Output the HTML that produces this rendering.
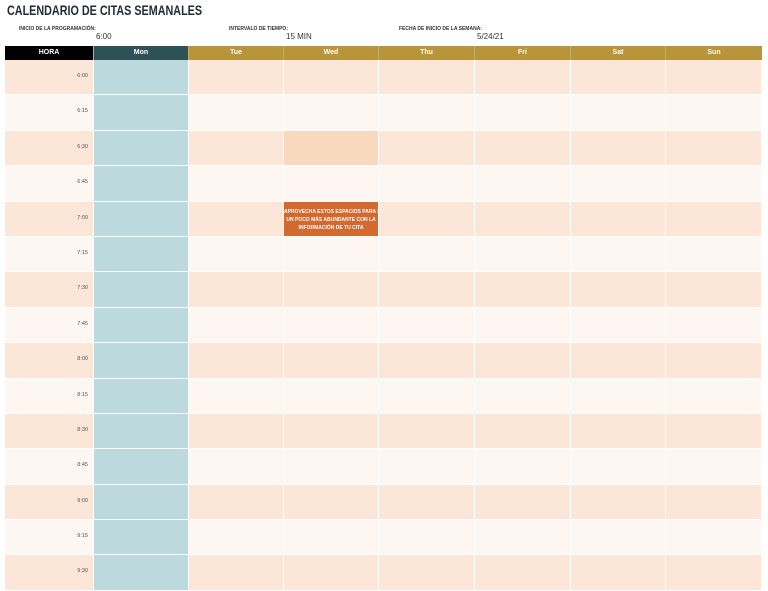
<!DOCTYPE html>
<html><head><meta charset="utf-8"><style>
*{margin:0;padding:0;box-sizing:border-box}
body{width:768px;height:583px;overflow:hidden;background:#fff;font-family:"Liberation Sans",sans-serif;position:relative}
.t{position:absolute;left:7px;top:2px;font-size:14px;font-weight:bold;color:#1f2b33;transform:scaleX(0.77);transform-origin:0 0;white-space:nowrap}
.lb{position:absolute;font-size:5px;font-weight:bold;color:#333;top:26px}
.v{position:absolute;font-size:8px;color:#333;top:32px}
.grid{position:absolute;left:5px;top:46px;width:757px;display:grid;grid-template-columns:89px 95px 95px 95px 96px 96px 95px 96px}
.h{height:13.5px;color:#fff;font-size:7px;font-weight:bold;text-align:center;line-height:13.5px;background:#b8953a;border-right:1px solid #c9ad66}
.rows{position:absolute;left:5px;top:60px;width:757px}
.r{height:35.4px;display:grid;grid-template-columns:89px 95px 95px 95px 96px 96px 95px 96px;border-bottom:1.5px solid #fff}
.r div{border-right:1px solid #fff;position:relative}
.o div{background:#fbe6d8}.e div{background:#fdf6f1}
.r div.m{background:#bcd9de}
.r div.tm{font-size:5.5px;color:#555;text-align:right;padding-right:5px;line-height:33px}
</style></head><body>
<div class="t">CALENDARIO DE CITAS SEMANALES</div>
<div class="lb" style="left:19px">INICIO DE LA PROGRAMACIÓN:</div><div class="v" style="left:96px">6:00</div>
<div class="lb" style="left:229px">INTERVALO DE TIEMPO:</div><div class="v" style="left:286px">15 MIN</div>
<div class="lb" style="left:399px">FECHA DE INICIO DE LA SEMANA:</div><div class="v" style="left:477px">5/24/21</div>
<div class="grid">
<div class="h" style="background:#000">HORA</div><div class="h" style="background:#2e5157">Mon</div><div class="h">Tue</div><div class="h">Wed</div><div class="h">Thu</div><div class="h">Fri</div><div class="h">Sat</div><div class="h" style="border:0">Sun</div>
</div>
<div class="rows">
<div class="r o"><div class="tm">6:00</div><div class="m"></div><div></div><div></div><div></div><div></div><div></div><div></div></div>
<div class="r e"><div class="tm">6:15</div><div class="m"></div><div></div><div></div><div></div><div></div><div></div><div></div></div>
<div class="r o"><div class="tm">6:30</div><div class="m"></div><div></div><div style="background:#f9d9bd"></div><div></div><div></div><div></div><div></div></div>
<div class="r e"><div class="tm">6:45</div><div class="m"></div><div></div><div></div><div></div><div></div><div></div><div></div></div>
<div class="r o"><div class="tm">7:00</div><div class="m"></div><div></div><div style="background:#d2692f;color:#fff;font-size:5px;font-weight:bold;text-align:center;line-height:8px;padding-top:6px;white-space:nowrap;overflow:hidden">APROVECHA ESTOS ESPACIOS PARA SER<br>UN POCO MÁS ABUNDANTE CON LA<br>INFORMACIÓN DE TU CITA</div><div></div><div></div><div></div><div></div></div>
<div class="r e"><div class="tm">7:15</div><div class="m"></div><div></div><div></div><div></div><div></div><div></div><div></div></div>
<div class="r o"><div class="tm">7:30</div><div class="m"></div><div></div><div></div><div></div><div></div><div></div><div></div></div>
<div class="r e"><div class="tm">7:45</div><div class="m"></div><div></div><div></div><div></div><div></div><div></div><div></div></div>
<div class="r o"><div class="tm">8:00</div><div class="m"></div><div></div><div></div><div></div><div></div><div></div><div></div></div>
<div class="r e"><div class="tm">8:15</div><div class="m"></div><div></div><div></div><div></div><div></div><div></div><div></div></div>
<div class="r o"><div class="tm">8:30</div><div class="m"></div><div></div><div></div><div></div><div></div><div></div><div></div></div>
<div class="r e"><div class="tm">8:45</div><div class="m"></div><div></div><div></div><div></div><div></div><div></div><div></div></div>
<div class="r o"><div class="tm">9:00</div><div class="m"></div><div></div><div></div><div></div><div></div><div></div><div></div></div>
<div class="r e"><div class="tm">9:15</div><div class="m"></div><div></div><div></div><div></div><div></div><div></div><div></div></div>
<div class="r o"><div class="tm">9:30</div><div class="m"></div><div></div><div></div><div></div><div></div><div></div><div></div></div>
</div>
</body></html>
